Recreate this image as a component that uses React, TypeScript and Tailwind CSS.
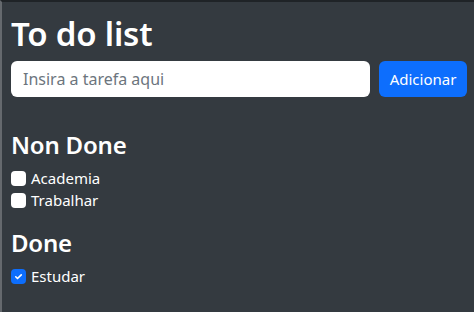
export default function App() {
  return (
    <div
      className="min-h-[312px] w-[474px] bg-[#343a40] border-t-2 border-t-[#1f2327] border-l-2 border-l-[#65696e] text-white"
      style={{ fontFamily: '"Noto Sans", "Open Sans", sans-serif' }}
    >
      <div className="pl-[9px] pr-[7px] pt-[10px]">
        <h1 className="text-[33px] leading-[44px] font-semibold tracking-[-0.2px]">To do list</h1>
        <div className="mt-[5px] flex gap-[9px]">
          <input
            className="h-[36px] flex-1 rounded-[6px] bg-white px-3 text-[16px] text-gray-900 placeholder:text-[#6c757d] outline-none"
            placeholder="Insira a tarefa aqui"
          />
          <button className="h-[36px] w-[88px] rounded-[6px] bg-[#0d6efd] text-[15px] text-white">
            Adicionar
          </button>
        </div>
        <h2 className="mt-[32px] text-[24px] leading-[32px] font-semibold tracking-[-0.2px]">Non Done</h2>
        <div className="mt-[6px] flex flex-col">
          <label className="flex h-[22px] items-center gap-[5px] text-[15px]">
            <span className="h-[15px] w-[15px] rounded-[4px] bg-white" />
            Academia
          </label>
          <label className="flex h-[22px] items-center gap-[5px] text-[15px]">
            <span className="h-[15px] w-[15px] rounded-[4px] bg-white" />
            Trabalhar
          </label>
        </div>
        <h2 className="mt-[16px] text-[24px] leading-[32px] font-semibold tracking-[-0.2px]">Done</h2>
        <div className="mt-[6px] flex flex-col">
          <label className="flex h-[22px] items-center gap-[5px] text-[15px]">
            <span className="flex h-[15px] w-[15px] items-center justify-center rounded-[4px] bg-[#0d6efd]">
              <svg viewBox="0 0 20 20" className="h-[11px] w-[11px]">
                <path d="M5 10.5l3.2 3.2L15 7" fill="none" stroke="white" strokeWidth="3" strokeLinecap="round" strokeLinejoin="round" />
              </svg>
            </span>
            Estudar
          </label>
        </div>
      </div>
    </div>
  );
}
